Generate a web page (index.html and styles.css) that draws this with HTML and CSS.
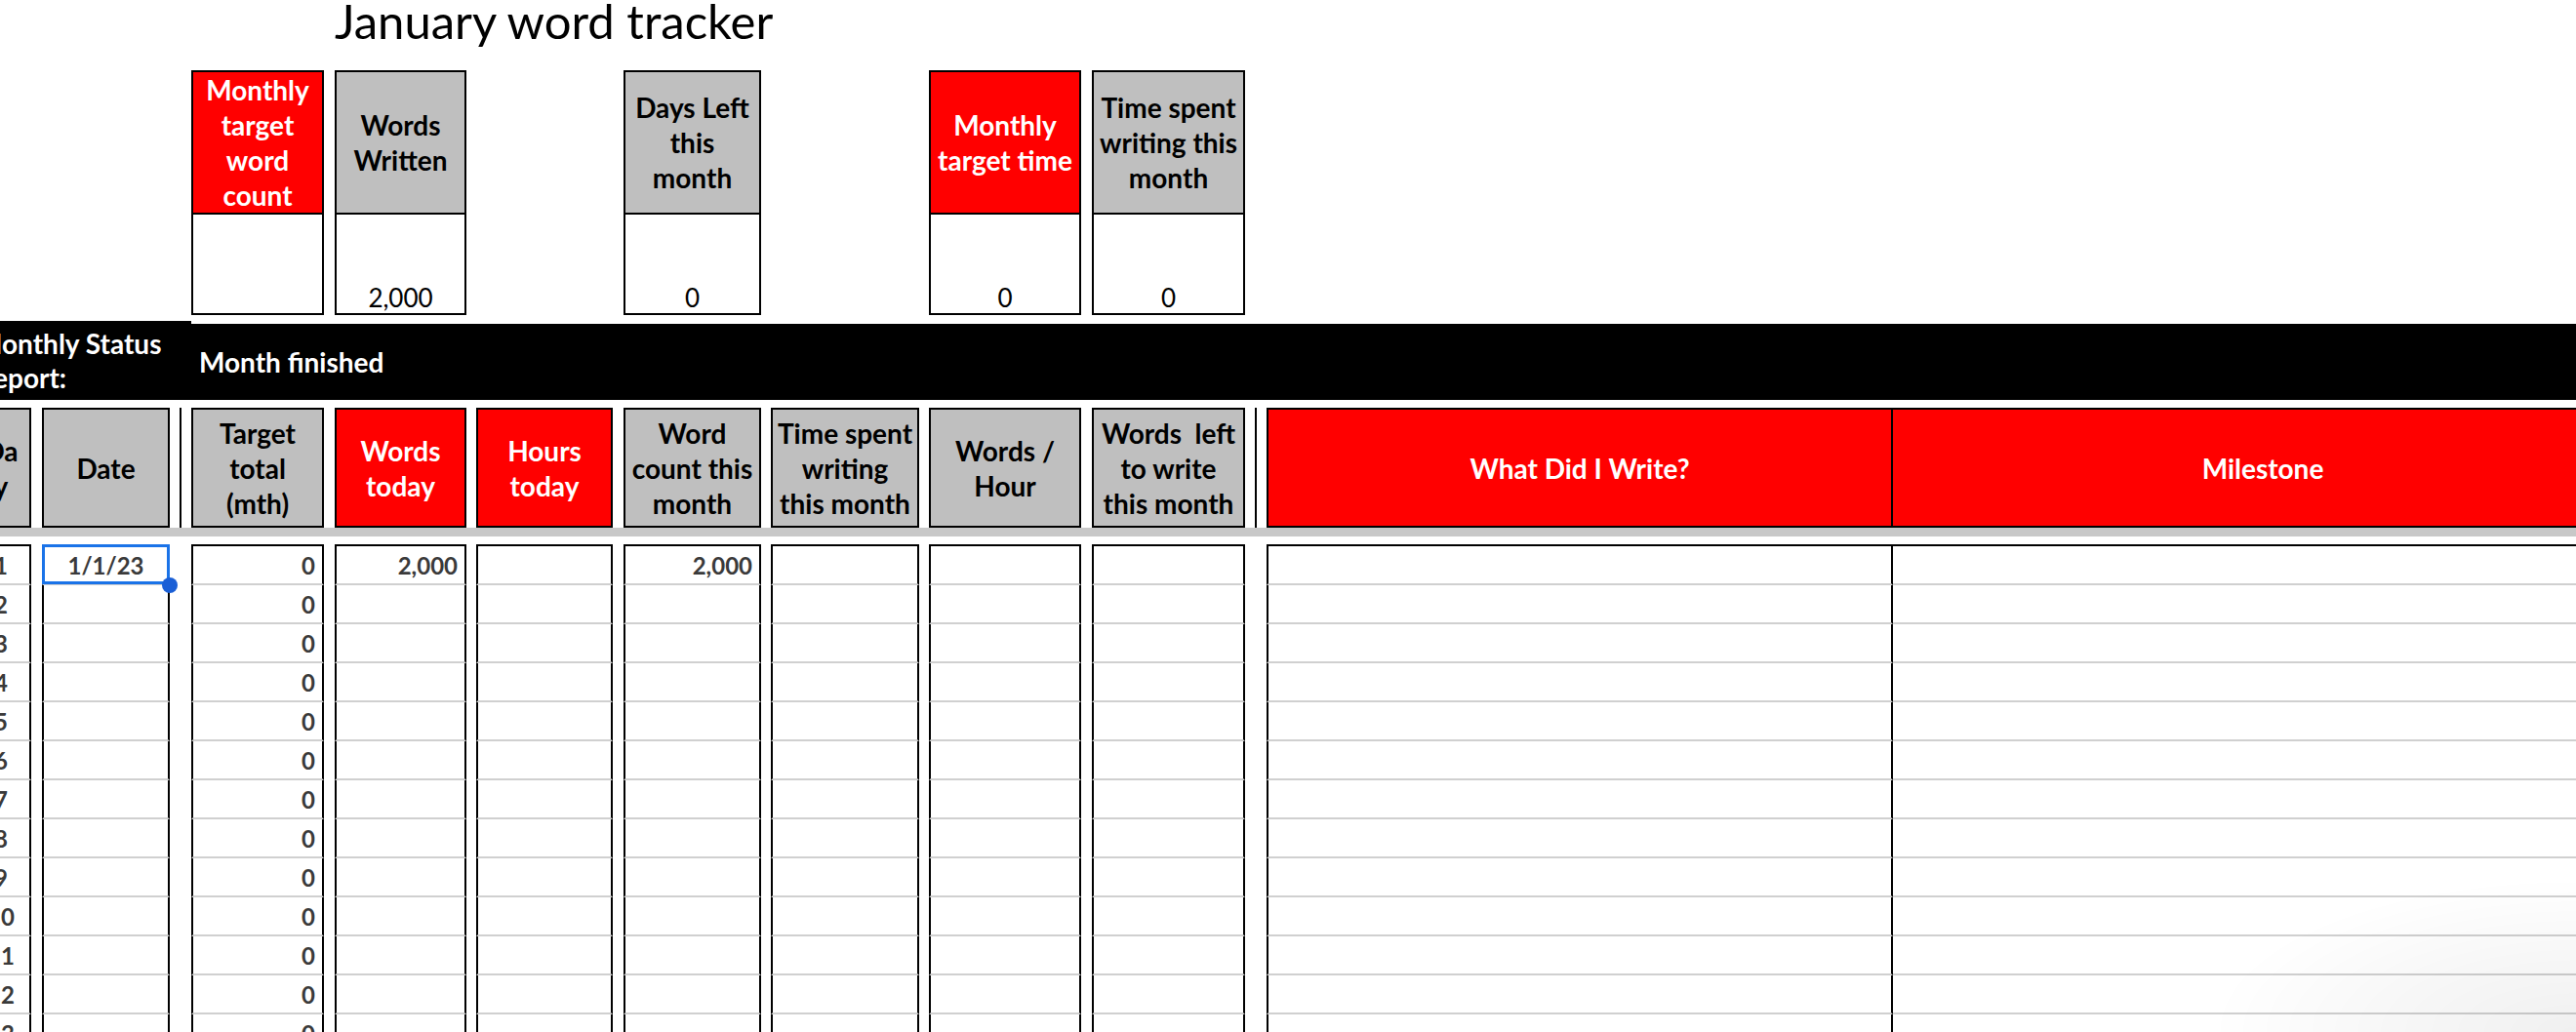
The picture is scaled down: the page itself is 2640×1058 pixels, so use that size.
FILE: index.html
```html
<!DOCTYPE html>
<html lang="en">
<head>
<meta charset="utf-8">
<title>January word tracker</title>
<link rel="stylesheet" href="styles.css">
</head>
<body>
<div class="sheet">
  <div class="grid titlebar">
    <h1 class="title">January word tracker</h1>
  </div>

  <div class="grid summary">
    <div class="sbox c5"><div class="sh red">Monthly<br>target<br>word<br>count</div><div class="sv"></div></div>
    <div class="sbox c7"><div class="sh">Words<br>Written</div><div class="sv">2,000</div></div>
    <div class="sbox c11"><div class="sh">Days Left<br>this<br>month</div><div class="sv">0</div></div>
    <div class="sbox c15"><div class="sh red">Monthly<br>target time</div><div class="sv">0</div></div>
    <div class="sbox c17"><div class="sh">Time spent<br>writing this<br>month</div><div class="sv">0</div></div>
  </div>

  <div class="grid statusbar">
    <div class="status-label">Monthly Status<br>Report:</div>
    <div class="status-value">Month finished</div>
  </div>

  <div class="grid headrow">
    <div class="hc c1">Da<br>y</div>
    <div class="hc c3">Date</div>
    <div class="hsep c4"></div>
    <div class="hc c5">Target<br>total<br>(mth)</div>
    <div class="hc c7 red">Words<br>today</div>
    <div class="hc c9 red">Hours<br>today</div>
    <div class="hc c11">Word<br>count this<br>month</div>
    <div class="hc c13">Time spent<br>writing<br>this month</div>
    <div class="hc c15">Words /<br>Hour</div>
    <div class="hc c17">Words&nbsp; left<br>to write<br>this month</div>
    <div class="hsep c18"></div>
    <div class="hc c19 red what">What Did I Write?</div>
    <div class="hc c20 red milestone">Milestone</div>
  </div>

  <div class="band"></div>

  <div class="rows">
    <div class="grid row"><div>1</div><div class="sel">1/1/23</div><div>0</div><div>2,000</div><div></div><div>2,000</div><div></div><div></div><div></div><div></div><div></div></div>
    <div class="grid row"><div>2</div><div></div><div>0</div><div></div><div></div><div></div><div></div><div></div><div></div><div></div><div></div></div>
    <div class="grid row"><div>3</div><div></div><div>0</div><div></div><div></div><div></div><div></div><div></div><div></div><div></div><div></div></div>
    <div class="grid row"><div>4</div><div></div><div>0</div><div></div><div></div><div></div><div></div><div></div><div></div><div></div><div></div></div>
    <div class="grid row"><div>5</div><div></div><div>0</div><div></div><div></div><div></div><div></div><div></div><div></div><div></div><div></div></div>
    <div class="grid row"><div>6</div><div></div><div>0</div><div></div><div></div><div></div><div></div><div></div><div></div><div></div><div></div></div>
    <div class="grid row"><div>7</div><div></div><div>0</div><div></div><div></div><div></div><div></div><div></div><div></div><div></div><div></div></div>
    <div class="grid row"><div>8</div><div></div><div>0</div><div></div><div></div><div></div><div></div><div></div><div></div><div></div><div></div></div>
    <div class="grid row"><div>9</div><div></div><div>0</div><div></div><div></div><div></div><div></div><div></div><div></div><div></div><div></div></div>
    <div class="grid row"><div>10</div><div></div><div>0</div><div></div><div></div><div></div><div></div><div></div><div></div><div></div><div></div></div>
    <div class="grid row"><div>11</div><div></div><div>0</div><div></div><div></div><div></div><div></div><div></div><div></div><div></div><div></div></div>
    <div class="grid row"><div>12</div><div></div><div>0</div><div></div><div></div><div></div><div></div><div></div><div></div><div></div><div></div></div>
    <div class="grid row"><div>13</div><div></div><div>0</div><div></div><div></div><div></div><div></div><div></div><div></div><div></div><div></div></div>
    <div class="grid row"><div>14</div><div></div><div>0</div><div></div><div></div><div></div><div></div><div></div><div></div><div></div><div></div></div>
  </div>
</div>
<div class="corner-shade"></div>
</body>
</html>
```

FILE: styles.css
```css
html, body {
  margin: 0;
  padding: 0;
  overflow: hidden;
  background: #fff;
}

body {
  font-family: Lato, "Open Sans", sans-serif;
  color: #000;
}

.sheet {
  margin-left: -30px;
  width: 2730px;
}

.grid {
  display: grid;
  grid-template-columns: 62px 11px 131px 22px 136px 11px 135px 10px 140px 11px 141px 10px 152px 10px 156px 11px 157px 22px 642px 760px;
}

.c1 { grid-column: 1; }
.c3 { grid-column: 3; }
.c4 { grid-column: 4; }
.c5 { grid-column: 5; }
.c7 { grid-column: 7; }
.c9 { grid-column: 9; }
.c11 { grid-column: 11; }
.c13 { grid-column: 13; }
.c15 { grid-column: 15; }
.c17 { grid-column: 17; }
.c18 { grid-column: 18; }
.c19 { grid-column: 19; }
.c20 { grid-column: 20; }

/* Title */
.titlebar {
  height: 72px;
}

.title {
  grid-column: 7 / 20;
  margin: 0;
  font-size: 49px;
  font-weight: 400;
  line-height: 43px;
  white-space: nowrap;
}

/* Summary boxes */
.summary {
  height: 251px;
}

.sbox {
  border: 2px solid #000;
  display: flex;
  flex-direction: column;
}

.sh {
  height: 146px;
  box-sizing: border-box;
  border-bottom: 2px solid #000;
  background: #bfbfbf;
  display: flex;
  align-items: center;
  justify-content: center;
  text-align: center;
  font-size: 28px;
  font-weight: 700;
  line-height: 36px;
}

.sh.red {
  background: #ff0000;
  color: #fff;
}

.sv {
  flex: 1;
  display: flex;
  align-items: flex-end;
  justify-content: center;
  padding-bottom: 3px;
  font-size: 26px;
  line-height: 26px;
}

/* Status bar */
.statusbar {
  margin-top: 9px;
  height: 78px;
  background: #000;
  color: #fff;
  font-weight: 700;
  font-size: 28px;
  line-height: 35px;
}

.status-label {
  grid-column: 1 / 5;
  margin-top: -3px;
  background: #000;
  padding-left: 6px;
  display: flex;
  align-items: center;
  white-space: nowrap;
}

.status-value {
  grid-column: 5 / 21;
  padding-left: 8px;
  display: flex;
  align-items: center;
}

/* Header row */
.headrow {
  margin-top: 8px;
  height: 123px;
}

.hc {
  border: 2px solid #000;
  background: #bfbfbf;
  display: flex;
  align-items: center;
  justify-content: center;
  text-align: center;
  font-size: 28px;
  font-weight: 700;
  line-height: 36px;
  white-space: nowrap;
}

.hc.red {
  background: #ff0000;
  color: #fff;
}

.hc.milestone {
  border-left: none;
}

.hsep {
  width: 2px;
  justify-self: center;
  background: #000;
}

.band {
  height: 9px;
  background: #c8c8c8;
  margin-bottom: 8px;
}

/* Data rows */
.row > div {
  box-sizing: border-box;
  height: 40px;
  border-left: 2px solid #000;
  border-right: 2px solid #000;
  border-bottom: 2px solid #d0d0d0;
  display: flex;
  align-items: center;
  justify-content: flex-end;
  padding: 0 7px;
  font-size: 24px;
  font-weight: 700;
  color: #3a3a3a;
}

.row:first-child > div {
  height: 42px;
  border-top: 2px solid #000;
}

.row > :nth-child(1) { grid-column: 1; justify-content: center; padding: 0; }
.row > :nth-child(2) { grid-column: 3; justify-content: center; padding: 0; }
.row > :nth-child(3) { grid-column: 5; }
.row > :nth-child(4) { grid-column: 7; }
.row > :nth-child(5) { grid-column: 9; }
.row > :nth-child(6) { grid-column: 11; }
.row > :nth-child(7) { grid-column: 13; }
.row > :nth-child(8) { grid-column: 15; }
.row > :nth-child(9) { grid-column: 17; }
.row > :nth-child(10) { grid-column: 19; }
.row > :nth-child(11) { grid-column: 20; border-left: none; }

/* Selected cell */
.row > .sel {
  position: relative;
}

.row > .sel::after {
  content: "";
  position: absolute;
  top: -2px;
  left: -2px;
  right: -2px;
  bottom: -1px;
  border: 3px solid #1a73e8;
}

.row > .sel::before {
  content: "";
  position: absolute;
  right: -10px;
  bottom: -10px;
  width: 16px;
  height: 16px;
  border-radius: 50%;
  background: #1a5fd6;
  z-index: 2;
}

.corner-shade {
  position: fixed;
  right: 0;
  bottom: 0;
  width: 380px;
  height: 160px;
  pointer-events: none;
  background: radial-gradient(ellipse at 100% 100%, rgba(0, 0, 0, 0.06) 0%, rgba(0, 0, 0, 0.03) 35%, rgba(0, 0, 0, 0) 70%);
}
```
